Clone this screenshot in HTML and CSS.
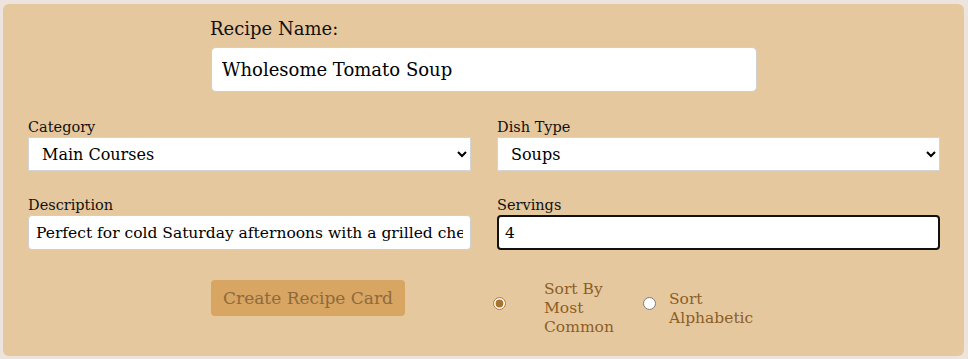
FILE: index.html
```html
<!DOCTYPE html>
<html>
<head>
<meta charset="utf-8">
<link rel="stylesheet" href="styles.css">
</head>
<body>
<div class="panel">
  <div class="name-block">
    <label class="name-label" for="rname">Recipe Name:</label>
    <input id="rname" class="name-input" type="text" value="Wholesome Tomato Soup">
  </div>
  <div class="fields">
    <div class="field">
      <label class="field-label">Category</label>
      <select class="sel"><option>Main Courses</option></select>
    </div>
    <div class="field">
      <label class="field-label">Dish Type</label>
      <select class="sel"><option>Soups</option></select>
    </div>
    <div class="field">
      <label class="field-label">Description</label>
      <input class="txt" type="text" value="Perfect for cold Saturday afternoons with a grilled cheese sandwich">
    </div>
    <div class="field">
      <label class="field-label">Servings</label>
      <input class="txt focused" type="text" value="4">
    </div>
  </div>
  <div class="actions">
    <button class="create">Create Recipe Card</button>
    <div class="sort">
      <label class="opt opt-common"><input type="radio" name="sort" checked><span>Sort By Most Common</span></label>
      <label class="opt opt-alpha"><input type="radio" name="sort"><span>Sort Alphabetic</span></label>
    </div>
  </div>
</div>
</body>
</html>
```
FILE: styles.css
```css
html, body { margin: 0; padding: 0; }
body {
  background: #ede4dd;
  font-family: "DejaVu Serif", serif;
  width: 968px;
  height: 359px;
  overflow: hidden;
}
.panel {
  box-sizing: border-box;
  margin: 4px 0 0 3px;
  width: 961px;
  height: 352px;
  background: #e6c89e;
  border-radius: 6px;
  padding: 0 24px 0 25px;
}
.name-block {
  width: 546px;
  margin: 0 auto;
  padding-top: 13px;
  display: flex;
  flex-direction: column;
}
.name-label {
  font-size: 18px;
  line-height: 24px;
  color: #111;
  margin-left: -1px;
}
.name-input {
  box-sizing: border-box;
  margin-top: 6px;
  height: 45px;
  width: 546px;
  border: 1px solid #cfcfcf;
  border-radius: 5px;
  background: #fff;
  font-family: "DejaVu Serif", serif;
  font-size: 18px;
  padding: 0 10px;
  color: #000;
}
.fields {
  display: grid;
  grid-template-columns: 443px 443px;
  column-gap: 26px;
  row-gap: 24px;
  margin-top: 25px;
}
.field { display: flex; flex-direction: column; }
.field-label {
  font-size: 14.5px;
  line-height: 20px;
  color: #111;
}
.sel {
  box-sizing: border-box;
  height: 34px;
  width: 443px;
  border: 1px solid #d4d4d4;
  border-radius: 0;
  background-color: #fff;
  font-family: "DejaVu Serif", serif;
  font-size: 16px;
  color: #000;
  padding: 0 8px 0 9px;
}
.txt {
  box-sizing: border-box;
  height: 35px;
  width: 443px;
  border: 1px solid #cfcfcf;
  border-radius: 4px;
  background: #fff;
  font-family: "DejaVu Serif", serif;
  font-size: 15.5px;
  color: #000;
  padding: 0 7px;
}
.txt.focused {
  border: 2px solid #111;
  padding: 0 6px;
}
.actions {
  width: 546px;
  margin: 30px auto 0;
  display: flex;
  align-items: center;
}
.actions > * { flex-shrink: 0; }
.create {
  box-sizing: border-box;
  width: 194px;
  height: 36px;
  background: #d8a562;
  border: none;
  border-radius: 4px;
  font-family: "DejaVu Serif", serif;
  font-size: 17px;
  color: #8d6a3c;
  padding: 0;
  align-self: flex-start;
}
.sort {
  display: flex;
  align-items: center;
  margin-left: 88px;
}
.opt {
  display: flex;
  align-items: center;
  flex-shrink: 0;
  color: #8b5e28;
  font-size: 15.5px;
  line-height: 19px;
}
.opt input, .opt span { flex-shrink: 0; }
.opt input {
  margin: 0;
  width: 13px;
  height: 13px;
  accent-color: #a8732f;
  position: relative;
  top: -5px;
}
.opt-common input { margin-right: 38px; }
.opt-common span { width: 80px; }
.opt-alpha { margin-left: 19px; }
.opt-alpha input { margin-right: 13px; }
.opt-alpha span { width: 92px; }
```
